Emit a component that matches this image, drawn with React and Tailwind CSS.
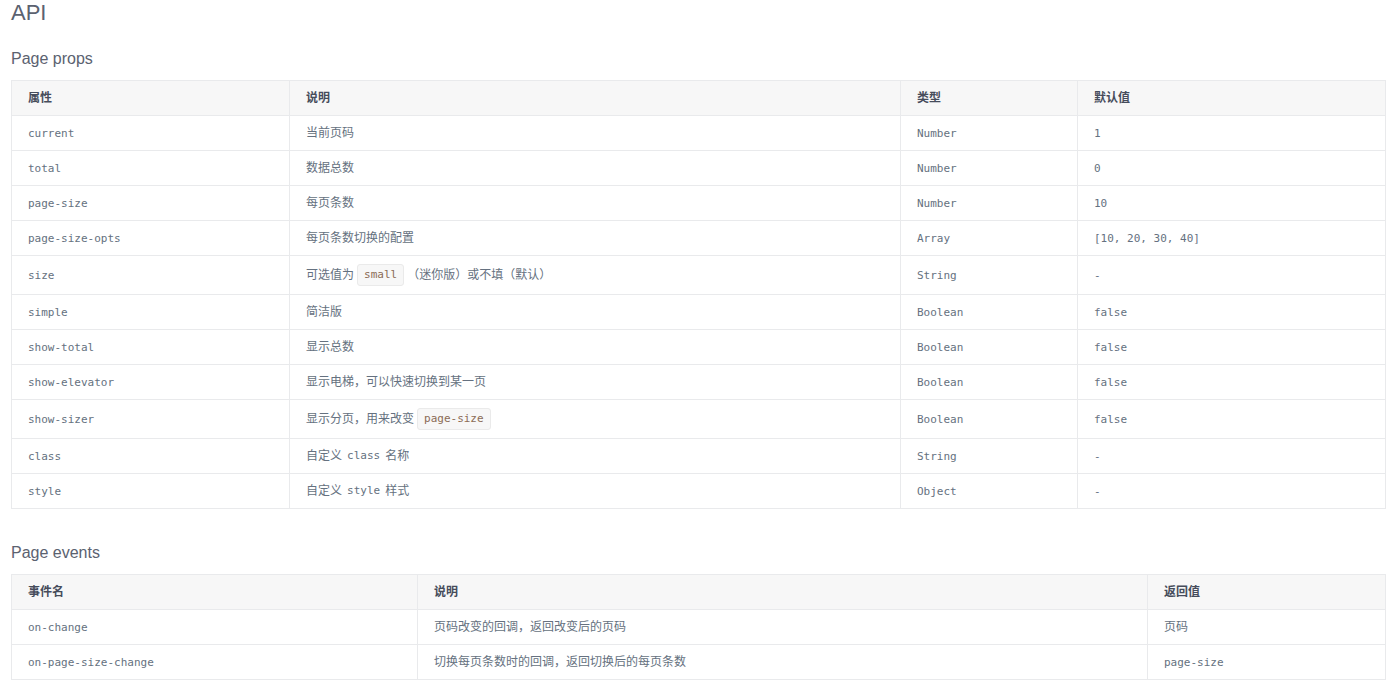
import React from 'react';

const SANS = { fontFamily: '"Liberation Sans", "Noto Sans CJK SC", sans-serif' };

// 表格内的代码字体
const monoCls = "font-['DejaVu_Sans_Mono','Noto_Sans_CJK_SC',monospace] text-[11px]";

function Chip({ children }) {
  return (
    <span className={`${monoCls} inline-flex items-center h-[22px] px-[6px] mx-[3px] rounded-[3px] border border-[#eaeaea] bg-[#f7f7f7] text-[#8b6b55]`}>
      {children}
    </span>
  );
}

function Code({ children }) {
  return <span className={`${monoCls} px-[5px] text-[#657180]`}>{children}</span>;
}

const M = ({ children }) => <span className={`${monoCls} translate-y-px`}>{children}</span>;

const PROPS = [
  ['current', '当前页码', 'Number', <M>1</M>],
  ['total', '数据总数', 'Number', <M>0</M>],
  ['page-size', '每页条数', 'Number', <M>10</M>],
  ['page-size-opts', '每页条数切换的配置', 'Array', <M>[10, 20, 30, 40]</M>],
  ['size', <>可选值为<Chip>small</Chip>（迷你版）或不填（默认）</>, 'String', <M>-</M>, true],
  ['simple', '简洁版', 'Boolean', <M>false</M>],
  ['show-total', '显示总数', 'Boolean', <M>false</M>],
  ['show-elevator', '显示电梯，可以快速切换到某一页', 'Boolean', <M>false</M>],
  ['show-sizer', <>显示分页，用来改变<Chip>page-size</Chip></>, 'Boolean', <M>false</M>, true],
  ['class', <>自定义<Code>class</Code>名称</>, 'String', <M>-</M>],
  ['style', <>自定义<Code>style</Code>样式</>, 'Object', <M>-</M>],
];

const EVENTS = [
  ['on-change', '页码改变的回调，返回改变后的页码', '页码'],
  ['on-page-size-change', '切换每页条数时的回调，返回切换后的每页条数', <M>page-size</M>],
];

const th = 'text-left font-bold text-[12px] text-[#464c5b] bg-[#f7f7f7] border border-[#e9eaec] px-4 py-2 leading-[18px]';
const td = 'text-[12px] text-[#657180] border border-[#e9eaec] px-4 py-2 leading-[18px] align-middle';

// 单元格内容固定高度，避免混排字体撑高行
function Cell({ children, tall }) {
  return (
    <div className={`flex items-center whitespace-pre ${tall ? 'h-[22px]' : 'h-[18px]'}`}>
      {children}
    </div>
  );
}

export default function App() {
  return (
    <div className="min-h-screen bg-white pl-[11px] pr-[7px]" style={SANS}>
      <h2 className="text-[22px] leading-[26px] text-[#5b6270] font-normal">API</h2>

      <h3 className="mt-[21px] text-[16px] leading-[24px] text-[#5b6270] font-normal">Page props</h3>
      <table className="mt-[9px] w-full table-fixed border-collapse">
        <colgroup>
          <col className="w-[278px]" />
          <col className="w-[611px]" />
          <col className="w-[177px]" />
          <col />
        </colgroup>
        <thead>
          <tr>
            {['属性', '说明', '类型', '默认值'].map(h => (
              <th key={h} className={th}><Cell>{h}</Cell></th>
            ))}
          </tr>
        </thead>
        <tbody>
          {PROPS.map(([name, desc, type, def, chip]) => (
            <tr key={name}>
              <td className={td}><Cell tall={chip}><M>{name}</M></Cell></td>
              <td className={td}><Cell tall={chip}>{desc}</Cell></td>
              <td className={td}><Cell tall={chip}><M>{type}</M></Cell></td>
              <td className={td}><Cell tall={chip}>{def}</Cell></td>
            </tr>
          ))}
        </tbody>
      </table>

      <h3 className="mt-[32px] text-[16px] leading-[24px] text-[#5b6270] font-normal">Page events</h3>
      <table className="mt-[9px] w-full table-fixed border-collapse">
        <colgroup>
          <col className="w-[406px]" />
          <col className="w-[730px]" />
          <col />
        </colgroup>
        <thead>
          <tr>
            {['事件名', '说明', '返回值'].map(h => (
              <th key={h} className={th}><Cell>{h}</Cell></th>
            ))}
          </tr>
        </thead>
        <tbody>
          {EVENTS.map(([name, desc, ret]) => (
            <tr key={name}>
              <td className={td}><Cell><M>{name}</M></Cell></td>
              <td className={td}><Cell>{desc}</Cell></td>
              <td className={td}><Cell>{ret}</Cell></td>
            </tr>
          ))}
        </tbody>
      </table>
    </div>
  );
}
